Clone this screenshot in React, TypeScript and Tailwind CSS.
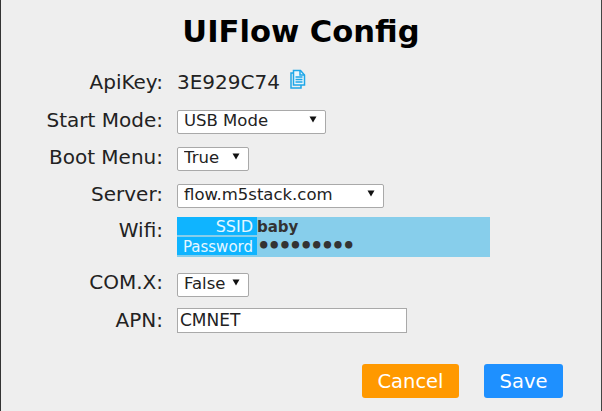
function SelectBox({ value, options, width }: { value: string; options: string[]; width: string }) {
  return (
    <div className={`${width} relative h-6`}>
      <select
        defaultValue={value}
        className="appearance-none w-full h-6 bg-white border border-[#a9a9a9] rounded-[2px] pl-[6px] pb-[2px] text-[16.500px] leading-none text-[#222] outline-none"
      >
        {options.map((o) => (
          <option key={o}>{o}</option>
        ))}
      </select>
      {/* arrow */}
      <svg width="8" height="7" viewBox="0 0 8 7" className="absolute right-[9px] top-[9px] pointer-events-none">
        <path d="M0.500 0.500h7L4 6.500z" fill="#111" />
      </svg>
    </div>
  );
}

function CopyIcon() {
  return (
    <svg width="16" height="20" viewBox="0 0 16 20" fill="none" stroke="#1ea7e8" strokeWidth="1.5" className="ml-[10px] -mt-[1px]">
      <path d="M3.500 2v14h11V6L10.500 1.500H3.500z" fill="#eaf6fc" />
      <path d="M3.500 4H1v15h10v-3" />
      <path d="M10 1.500v4.500h4.500" />
      <path d="M5.500 8h7M5.500 10.500h7M5.500 13h7" />
    </svg>
  );
}

export default function App() {
  return (
    <div className="w-[602px] h-[411px] overflow-hidden bg-[#eeeeee] border-l border-r border-l-[#333] border-r-[#444] font-['DejaVu_Sans',sans-serif] text-[#222]">
      {/* Title */}
      <h1 className="pt-[12px] h-[66px] text-center text-[30.600px] leading-[40px] font-bold text-black">UIFlow Config</h1>

      {/* Form */}
      <div className="grid grid-cols-[162px_1fr] gap-x-[14px] text-[20px] leading-[24px]">
        <div className="h-[41px] pt-[4px] text-right">ApiKey:</div>
        <div className="h-[41px] flex items-start pt-[4px]">
          <span>3E929C74</span>
          <CopyIcon />
        </div>

        <div className="h-[37px] pt-[1px] text-right">Start Mode:</div>
        <div className="h-[37px]">
          <SelectBox value="USB Mode" options={['USB Mode', 'Internet Mode']} width="w-[149px]" />
        </div>

        <div className="h-[37px] pt-[1px] text-right">Boot Menu:</div>
        <div className="h-[37px]">
          <SelectBox value="True" options={['True', 'False']} width="w-[72px]" />
        </div>

        <div className="h-[36px] pt-[1px] text-right">Server:</div>
        <div className="h-[36px]">
          <SelectBox value="flow.m5stack.com" options={['flow.m5stack.com']} width="w-[207px]" />
        </div>

        <div className="h-[53px] pt-[1px] text-right">Wifi:</div>
        <div className="h-[53px]">
          <div className="w-[313px] h-[40px] bg-[#87ceeb] text-[15px] leading-[18px]">
            <div className="flex h-[20px]">
              <div className="w-[80px] h-[18px] pt-[1px] bg-[#0fb4ff] text-[#e6f7ff] text-[16px] text-right pr-[4px]">SSID</div>
              <input defaultValue="baby" className="w-[180px] h-[18px] pt-[1px] bg-transparent font-bold text-[#333] outline-none" />
            </div>
            <div className="flex h-[20px]">
              <div className="w-[80px] h-[18px] pt-[1px] bg-[#0fb4ff] text-[#e6f7ff] text-right pr-[4px]">Password</div>
              <input type="password" defaultValue="123456789" className="w-[180px] h-[18px] bg-transparent font-bold text-[21px] text-[#333] tracking-[-2.800px] outline-none" />
            </div>
          </div>
        </div>

        <div className="h-[37px] text-right">COM.X:</div>
        <div className="h-[37px]">
          <SelectBox value="False" options={['True', 'False']} width="w-[72px]" />
        </div>

        <div className="h-[57px] pt-[1px] text-right">APN:</div>
        <div className="h-[57px]">
          <input
            defaultValue="CMNET"
            className="w-[230px] h-[25px] bg-white border border-[#a9a9a9] pl-[2px] text-[17px] text-[#222] outline-none"
          />
        </div>
      </div>

      {/* Buttons */}
      <div className="flex justify-end gap-[25px] pr-[38px]">
        <button className="w-[97px] h-[34px] pt-[1px] rounded-[3px] bg-[#ff9900] text-white text-[19.500px]">Cancel</button>
        <button className="w-[79px] h-[34px] pt-[1px] rounded-[3px] bg-[#1e90ff] text-white text-[19.500px]">Save</button>
      </div>
    </div>
  );
}
